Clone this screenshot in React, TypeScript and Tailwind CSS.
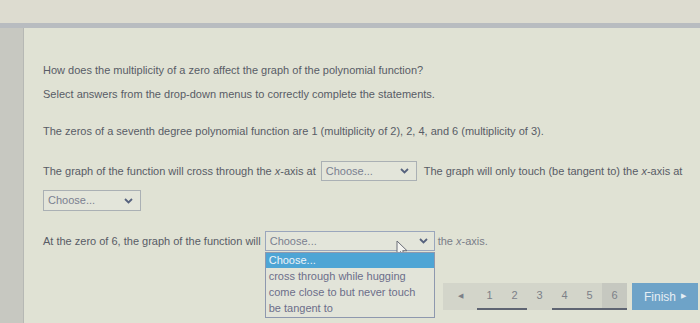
import { FC } from "react";

const Chevron: FC = () => (
  <svg width="9" height="6" viewBox="0 0 9 6" className="shrink-0">
    <path d="M1 1l3.5 3.5L8 1" fill="none" stroke="#56627e" strokeWidth="1.8" />
  </svg>
);

const Select: FC<{ width: string }> = ({ width }) => (
  <div
    className={`${width} flex h-[20px] items-center justify-between border border-[#aab0b4] bg-[#e3e5da] pl-[4px] pr-[7px] text-[#7a8090]`}
  >
    <span>Choose...</span>
    <Chevron />
  </div>
);

const Cursor: FC = () => (
  <svg width="12" height="19" viewBox="0 0 12 19" className="absolute left-[131px] top-[9px]">
    <path
      d="M1 1v14l3.5-3.5 2.5 6 2.2-1-2.5-5.8H11z"
      fill="#f4f4f0"
      stroke="#6a6e78"
      strokeWidth="1"
      strokeLinejoin="round"
    />
  </svg>
);

export default function App() {
  return (
    <div
      className="flex h-[323px] w-[700px] flex-col overflow-hidden bg-[#dedfd2] text-[11px] text-[#585c66]"
      style={{ fontFamily: '"Liberation Sans", Arial, sans-serif' }}
    >
      <div className="h-[23px] shrink-0 bg-[#dddcd0]" />
      <div className="h-[5px] shrink-0 bg-[#b8bcc0]" />
      <div className="flex flex-1">
        <div className="w-[24px] shrink-0 border-r border-[#b6b8b4] bg-[#c7c8c1]" />
        <div className="flex flex-1 flex-col bg-[#e0e2d4] pl-[19px] pt-[34px]">
          <p className="h-[16px] leading-[16px]">
            How does the multiplicity of a zero affect the graph of the polynomial function?
          </p>
          <p className="mt-[8px] h-[16px] leading-[16px]">
            Select answers from the drop-down menus to correctly complete the statements.
          </p>
          <p className="mt-[21px] h-[16px] leading-[16px]">
            The zeros of a seventh degree polynomial function are 1 (multiplicity of 2), 2, 4, and 6 (multiplicity of 3).
          </p>
          <div className="mt-[22px] flex h-[20px] items-center">
            <span>
              The graph of the function will cross through the <i>x</i>-axis at
            </span>
            <div className="ml-[5px]">
              <Select width="w-[96px]" />
            </div>
            <span className="ml-[7px]">
              The graph will only touch (be tangent to) the <i>x</i>-axis at
            </span>
          </div>
          <div className="mt-[9px] flex h-[21px] items-center">
            <Select width="w-[98px] h-[21px]" />
          </div>
          <div className="mt-[20px] flex h-[20px] items-center">
            <span>At the zero of 6, the graph of the function will</span>
            <div className="relative ml-[4px]">
              <div className="flex h-[20px] w-[170px] items-center justify-between border border-[#9aa6bc] bg-[#e3e5da] pl-[4px] pr-[6px] text-[#7a8090]">
                <span>Choose...</span>
                <Chevron />
              </div>
              <Cursor />
              <div className="absolute left-0 top-[21px] flex w-[170px] flex-col border border-[#8e98ae] bg-[#e2e4d9] pb-[1px] text-[#6c6e8a]">
                <div className="h-[15px] bg-[#4ea5d5] pl-[3px] leading-[15px] text-[#eef4f8]">Choose...</div>
                <div className="h-[16px] pl-[3px] leading-[17px]">cross through while hugging</div>
                <div className="h-[16px] pl-[3px] leading-[17px]">come close to but never touch</div>
                <div className="h-[16px] pl-[3px] leading-[17px]">be tangent to</div>
              </div>
            </div>
            <span className="ml-[3px] text-[#7a7e88]">
              the <i>x</i>-axis.
            </span>
          </div>
          <div className="mt-[32px] flex h-[27px] justify-end pr-[2px]">
            <div className="flex bg-[#d3d5ca] text-[#7c8088]">
              <div className="flex w-[34px] items-center justify-center text-[7px]">◀</div>
              {["1", "2", "3", "4", "5", "6"].map((n, i) => (
                <div
                  key={n}
                  className={`flex w-[25px] items-center justify-center border-b-2 text-[11px] ${
                    i === 2 ? "border-transparent" : "border-[#5e6472]"
                  } ${i === 5 ? "bg-[#c6c8c0]" : ""}`}
                >
                  {n}
                </div>
              ))}
            </div>
            <div className="ml-[5px] flex w-[66px] items-center justify-center gap-[5px] bg-[#6ea3c8] text-[12px] text-[#e6eef4]">
              <span>Finish</span>
              <span className="text-[7px]">▶</span>
            </div>
          </div>
        </div>
      </div>
    </div>
  );
}
